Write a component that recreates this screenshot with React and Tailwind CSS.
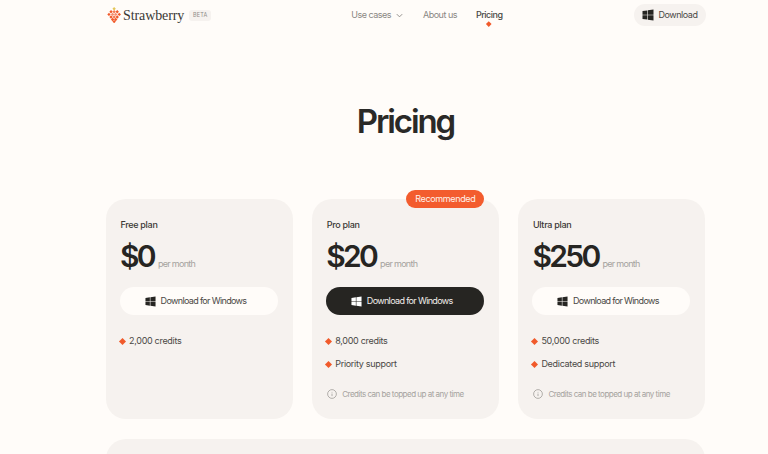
import React from "react";

const Win = ({ className }) => (
  <svg viewBox="0 0 24 24" className={className} fill="currentColor">
    <path d="M1 4.2 10.6 2.9V11.4H1ZM11.8 2.7 23 1V11.4H11.8ZM1 12.6H10.6V21.1L1 19.8ZM11.8 12.6H23V23L11.8 21.3Z" />
  </svg>
);

const Diamond = () => <span className="w-[5px] h-[5px] rotate-45 bg-[#f15a2b] shrink-0" />;

const Logo = () => {
  const cells = [
    [4, 0, "#e3c65a"],
    [1, 3, "#f15a2b"], [4, 3, "#f47b56"], [7, 3, "#f15a2b"],
    [-1, 5.5, "#f15a2b"], [2.5, 5.5, "#f68f70"], [5.5, 5.5, "#f68f70"], [9, 5.5, "#f15a2b"],
    [1, 8, "#f15a2b"], [4, 8, "#f47b56"], [7, 8, "#f15a2b"],
    [2.5, 10.5, "#f15a2b"], [5.5, 10.5, "#f15a2b"],
    [4, 12.5, "#f15a2b"],
  ];
  return (
    <svg viewBox="-1.5 -0.5 14 15.5" className="w-[15px] h-[16px]">
      {cells.map(([x, y, c], i) => (
        <rect key={i} x={x} y={y} width="2.3" height="2.3" fill={c} transform={`rotate(45 ${x + 1.15} ${y + 1.15})`} />
      ))}
    </svg>
  );
};

const Card = ({ name, price, features, note, dark, badge }) => (
  <div className="relative w-[186.6px] h-[220px] rounded-[20px] bg-[#f6f2ef] px-[14px] pt-[20px] flex flex-col">
    {badge && (
      <div className="absolute -top-[9px] right-[14.5px] h-[18px] w-[78px] rounded-full bg-[#f35c2e] text-[#fff1ea] text-[9px] tracking-[-0.35px] flex items-center justify-center">
        Recommended
      </div>
    )}
    <div className="ml-[0.5px] text-[9px] leading-[12px] font-medium tracking-[-0.3px] text-[#3a3835]">{name}</div>
    <div className="flex items-baseline gap-[4px] mt-[7px] h-[36px]">
      <span className="text-[30px] leading-[36px] font-semibold tracking-[-2.7px] text-[#262522]">{price}</span>
      <span className="text-[9px] text-[#a5a29e] tracking-[-0.7px]">per month</span>
    </div>
    <div
      className={`mt-[13px] h-[28px] w-[158px] pr-[7px] rounded-full flex items-center justify-center gap-[5px] text-[9px] tracking-[-0.65px] ${
        dark ? "bg-[#262522] text-[#f1eeea]" : "bg-[#fffcf9] text-[#4a4845]"
      }`}
    >
      <Win className={`w-[11px] h-[11px] ${dark ? "text-white" : "text-[#262522]"}`} />
      <span>Download for Windows</span>
    </div>
    <div className="mt-[20px] flex flex-col gap-[11px]">
      {features.map((f) => (
        <div key={f} className="flex items-center gap-[4px] h-[12px] text-[9px] tracking-[-0.3px] text-[#4a4845]">
          <Diamond />
          <span>{f}</span>
        </div>
      ))}
    </div>
    {note && (
      <div className="mt-[18px] ml-[1px] flex items-center gap-[5px] whitespace-nowrap text-[8px] tracking-[-0.5px] text-[#a5a29e]">
        <svg viewBox="0 0 24 24" className="w-[10px] h-[10px] shrink-0" fill="none" stroke="#9b9894" strokeWidth="1.8">
          <circle cx="12" cy="12" r="10.5" />
          <path d="M12 11v6M12 7v1.5" />
        </svg>
        <span>Credits can be topped up at any time</span>
      </div>
    )}
  </div>
);

export default function App() {
  return (
    <div
      className="h-[454px] w-[768px] overflow-hidden bg-[#fffcf9] pl-[106px]"
      style={{ fontFamily: "Inter, 'Liberation Sans', sans-serif" }}
    >
      <div className="w-[599px]">
        <header className="h-[30px] relative flex items-center">
          <div className="flex items-center ml-[1px]">
            <Logo />
            <span
              className="ml-[1px] text-[14px] text-[#3a3835] tracking-[-0.1px]"
              style={{ fontFamily: "'Liberation Serif', serif" }}
            >
              Strawberry
            </span>
            <span className="ml-[5px] h-[11px] w-[22px] rounded-[3px] bg-[#f6f2ef] text-[5.5px] text-[#8d8a86] flex items-center justify-center tracking-[0.2px]">
              BETA
            </span>
          </div>
          <nav className="ml-[140px] flex items-center text-[9px] tracking-[-0.5px] text-[#8a8783]">
            <span>Use cases</span>
            <svg viewBox="0 0 10 10" className="w-[9px] h-[9px] ml-[4px]" fill="none" stroke="#8a8783" strokeWidth="1">
              <path d="M2 3.5 5 6.5 8 3.5" />
            </svg>
            <span className="ml-[19px]">About us</span>
            <span className="ml-[19px] relative font-medium text-[#4a4845]">
              Pricing
              <span className="absolute left-1/2 -ml-[2px] top-[14px] w-[3.5px] h-[3.5px] rotate-45 bg-[#f15a2b]" />
            </span>
          </nav>
          <div className="ml-auto -mr-[1px] h-[22px] w-[72px] rounded-full bg-[#f6f2ef] flex items-center justify-center gap-[4px] text-[9px] tracking-[-0.45px] text-[#4a4845]">
            <Win className="w-[12px] h-[12px] text-[#262522]" />
            <span>Download</span>
          </div>
        </header>

        <h1 className="mt-[71px] text-center text-[33px] leading-[40px] font-semibold tracking-[-2.1px] text-[#2a2927]">
          Pricing
        </h1>

        <div className="mt-[58px] flex justify-between">
          <Card name="Free plan" price="$0" features={["2,000 credits"]} />
          <Card
            name="Pro plan"
            price="$20"
            dark
            badge
            note
            features={["8,000 credits", "Priority support"]}
          />
          <Card name="Ultra plan" price="$250" note features={["50,000 credits", "Dedicated support"]} />
        </div>

        <div className="mt-[20px] h-[60px] rounded-[20px] bg-[#f6f2ef]" />
      </div>
    </div>
  );
}
